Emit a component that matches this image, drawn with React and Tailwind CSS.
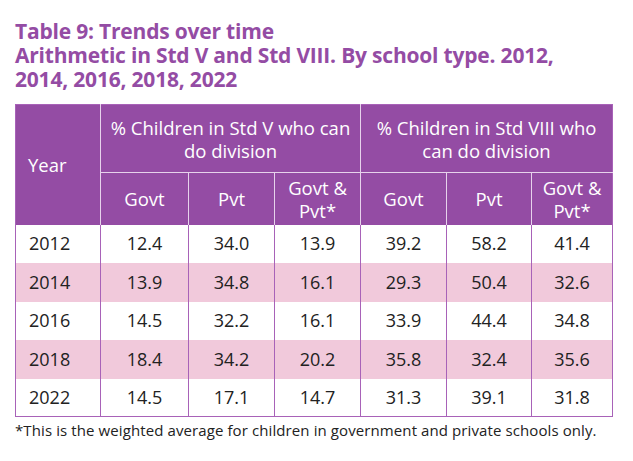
import React from "react";

const rows = [
  ["2012", "12.4", "34.0", "13.9", "39.2", "58.2", "41.4"],
  ["2014", "13.9", "34.8", "16.1", "29.3", "50.4", "32.6"],
  ["2016", "14.5", "32.2", "16.1", "33.9", "44.4", "34.8"],
  ["2018", "18.4", "34.2", "20.2", "35.8", "32.4", "35.6"],
  ["2022", "14.5", "17.1", "14.7", "31.3", "39.1", "31.8"],
];

export default function App() {
  return (
    <div
      className="w-[633px] h-[461px] bg-white pl-[15px] pt-[19px]"
      style={{ fontFamily: '"Open Sans", sans-serif' }}
    >
      <h1 className="text-[#944ca4] font-bold text-[21px] leading-[24px] tracking-[-0.2px]">
        Table 9: Trends over time
        <br />
        Arithmetic in Std V and Std VIII. By school type. 2012,
        <br />
        2014, 2016, 2018, 2022
      </h1>
      <table className="mt-[13px] w-[597px] table-fixed border-collapse border border-[#a862b8] text-[18px]">
        <colgroup>
          <col className="w-[85px]" />
          <col className="w-[88px]" />
          <col className="w-[86px]" />
          <col className="w-[86px]" />
          <col className="w-[86px]" />
          <col className="w-[85px]" />
          <col className="w-[81px]" />
        </colgroup>
        <thead className="bg-[#944ca4] text-white text-[18.5px] leading-[23px]">
          <tr className="h-[68px]">
            <th rowSpan={2} className="font-normal text-left pl-[12px] border-r border-[#e7d2ec]">
              Year
            </th>
            <th colSpan={3} className="font-normal px-0 border-r border-b border-[#e7d2ec] whitespace-nowrap">
              % Children in Std V who can
              <br />
              do division
            </th>
            <th colSpan={3} className="font-normal px-0 border-b border-[#e7d2ec] whitespace-nowrap">
              % Children in Std VIII who
              <br />
              can do division
            </th>
          </tr>
          <tr className="h-[52px]">
            <th className="font-normal border-r border-[#e7d2ec]">Govt</th>
            <th className="font-normal border-r border-[#e7d2ec]">Pvt</th>
            <th className="font-normal border-r border-[#e7d2ec]">
              Govt &amp;
              <br />
              Pvt*
            </th>
            <th className="font-normal border-r border-[#e7d2ec]">Govt</th>
            <th className="font-normal border-r border-[#e7d2ec]">Pvt</th>
            <th className="font-normal">
              Govt &amp;
              <br />
              Pvt*
            </th>
          </tr>
        </thead>
        <tbody className="text-[#222]">
          {rows.map((r, i) => (
            <tr key={r[0]} className={i % 2 === 1 ? "h-[39px] bg-[#f1c9db]" : "h-[38px] bg-white"}>
              {r.map((c, j) => (
                <td
                  key={j}
                  className={
                    j === 0
                      ? "pl-[13px] text-left border-r border-[#a862b8]"
                      : "text-center border-r border-[#a862b8]"
                  }
                >
                  {c}
                </td>
              ))}
            </tr>
          ))}
        </tbody>
      </table>
      <p className="text-[15px] leading-[18px] text-[#222] mt-[4px] tracking-[0.1px]">
        *This is the weighted average for children in government and private schools only.
      </p>
    </div>
  );
}
